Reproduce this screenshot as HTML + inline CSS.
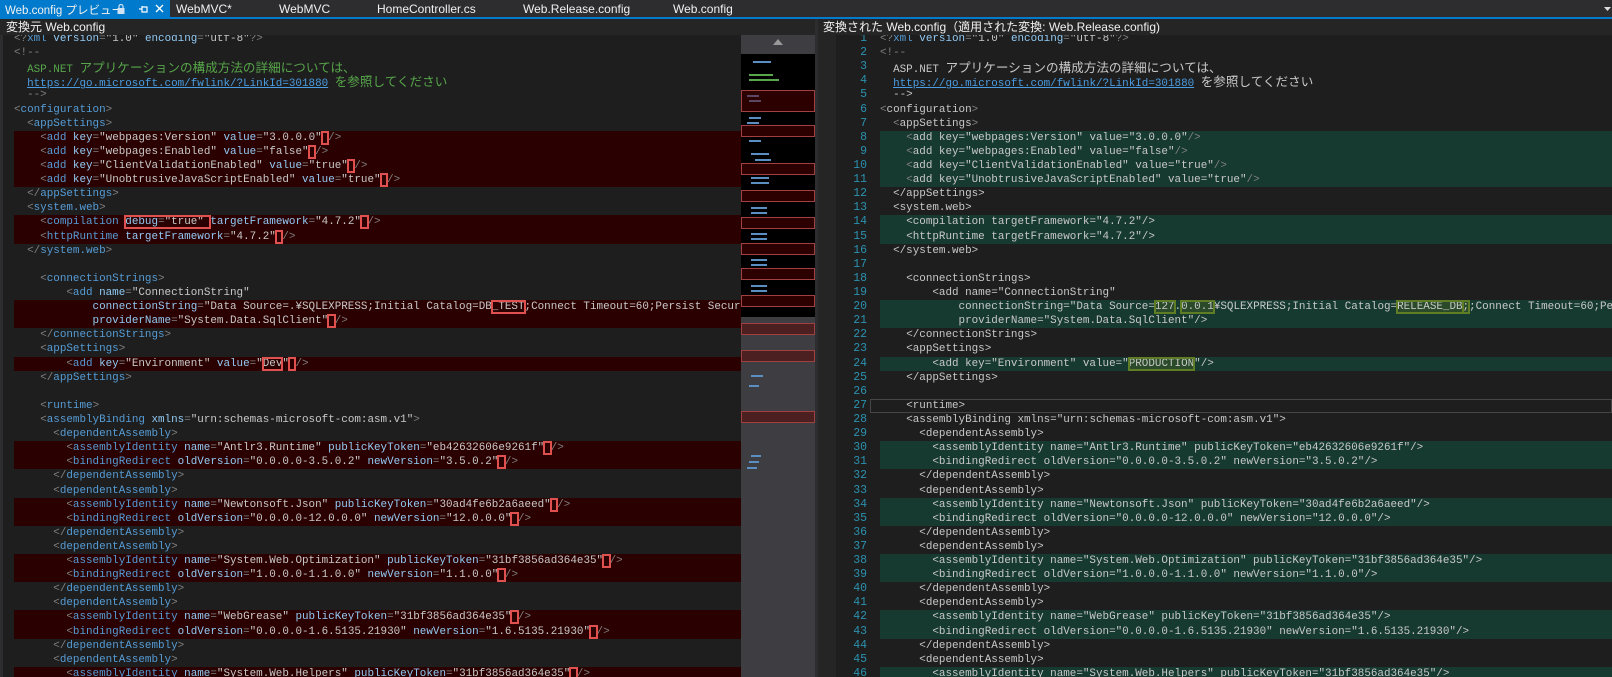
<!DOCTYPE html>
<html><head><meta charset="utf-8">
<style>
*{margin:0;padding:0;box-sizing:border-box}
body{width:1612px;height:677px;overflow:hidden;background:#1e1e1e;position:relative;font-family:"Liberation Sans","Noto Sans CJK JP",sans-serif}
.tabs{position:absolute;left:0;top:0;width:1612px;height:18px;background:#2d2d30;color:#f1f1f1;font-size:12px}
.tabs span{position:absolute;top:2px;white-space:nowrap}
.act{position:absolute;left:0;top:0;width:170px;height:19px;background:#007acc}
.bline{position:absolute;left:0;top:17px;width:1612px;height:2px;background:#007acc}
.hdr{position:absolute;top:19px;height:16px;background:#252526;color:#f1f1f1;font-size:12px;line-height:16px;white-space:nowrap}
.pane{position:absolute;top:35px;height:642px;overflow:hidden;font-family:"Liberation Mono","Noto Sans CJK JP",monospace;font-size:10.92px;color:#c8c8c8}
.in{position:absolute;left:0;top:-3px;width:100%}
.ln{height:14.12px;line-height:14.12px;white-space:pre;position:relative}
.L .ln{margin-left:14px}
.R .ln{margin-left:62px}
.L .h{background:#2b0000}
.R .h{background:#173a30}
.nm{position:absolute;left:-62px;width:49px;text-align:right;color:#2b91af;font-size:11.5px}
g{color:#808080}n{color:#569cd6}r{color:#92caf4}w{color:#c8c8c8}c{color:#57a64a}
l{color:#4b9ce0;text-decoration:underline}
j{font-size:12.6px;font-family:"Noto Sans CJK JP",sans-serif}
x{outline:2px solid #e0504f;outline-offset:-1px}
y{outline:2px solid #5f7d24;outline-offset:-1px;background:#2a4a2a}
.mm{position:absolute;left:741px;top:35px;width:74px;height:642px;background:#3e3e42;overflow:hidden}
.mm .vp{position:absolute;left:0;top:19px;width:74px;height:263px;background:#000}
.mm .b{position:absolute;height:1.6px;background:#5b8fc4}
.mm .rb{position:absolute;left:0;width:74px;border:1.5px solid #a04040;background:rgba(90,0,0,.5)}
</style></head><body>
<div class="tabs">
<div class="act"></div>
<span style="left:5px;font-size:11.5px">Web.config プレビュー</span>
<svg style="position:absolute;left:117px;top:4px" width="8" height="10"><rect x="0.5" y="4" width="7" height="6" fill="#cfe3f5"/><path d="M2 4V2.5a2 2 0 0 1 4 0V4" stroke="#cfe3f5" fill="none" stroke-width="1.2"/></svg>
<svg style="position:absolute;left:138px;top:4px" width="10" height="10"><path d="M1 5h3M4 2v6h5V3H4" stroke="#fff" fill="none" stroke-width="1.2"/></svg>
<svg style="position:absolute;left:155px;top:4px" width="9" height="9"><path d="M1 1l7 7M8 1L1 8" stroke="#fff" stroke-width="1.3"/></svg>
<span style="left:176px">WebMVC*</span>
<span style="left:279px">WebMVC</span>
<span style="left:377px">HomeController.cs</span>
<span style="left:523px">Web.Release.config</span>
<span style="left:673px">Web.config</span>
<svg style="position:absolute;left:1604px;top:7px" width="7" height="5"><path d="M0 0h7L3.5 4z" fill="#ddd"/></svg>
</div>
<div class="bline"></div>
<div class="hdr" style="left:0;width:815px;padding-left:6px">変換元 Web.config</div>
<div class="hdr" style="left:818px;width:794px;padding-left:5px">変換された Web.config（適用された変換: Web.Release.config)</div>
<div style="position:absolute;left:815px;top:19px;width:3px;height:658px;background:#2d2d30"></div>
<div style="position:absolute;left:818px;top:35px;width:18px;height:642px;background:#252526"></div>
<div style="position:absolute;left:0;top:35px;width:3px;height:642px;background:#2d2d30"></div>

<div class="pane L" style="left:0;width:741px"><div class="in">
<div class="ln"><g>&lt;?</g><n>xml</n> <r>version</r><g>=</g><w>"1.0"</w> <r>encoding</r><g>=</g><w>"utf-8"</w><g>?&gt;</g></div>
<div class="ln"><g>&lt;!--</g></div>
<div class="ln">  <c>ASP.NET <j>アプリケーションの構成方法の詳細については、</j></c></div>
<div class="ln">  <l>https://go.microsoft.com/fwlink/?LinkId=301880</l><c> <j>を参照してください</j></c></div>
<div class="ln">  <g>--&gt;</g></div>
<div class="ln"><g>&lt;</g><n>configuration</n><g>&gt;</g></div>
<div class="ln">  <g>&lt;</g><n>appSettings</n><g>&gt;</g></div>
<div class="ln h">    <g>&lt;</g><n>add</n> <r>key</r><g>=</g><w>"webpages:Version"</w> <r>value</r><g>=</g><w>"3.0.0.0"</w><x> </x><g>/&gt;</g></div>
<div class="ln h">    <g>&lt;</g><n>add</n> <r>key</r><g>=</g><w>"webpages:Enabled"</w> <r>value</r><g>=</g><w>"false"</w><x> </x><g>/&gt;</g></div>
<div class="ln h">    <g>&lt;</g><n>add</n> <r>key</r><g>=</g><w>"ClientValidationEnabled"</w> <r>value</r><g>=</g><w>"true"</w><x> </x><g>/&gt;</g></div>
<div class="ln h">    <g>&lt;</g><n>add</n> <r>key</r><g>=</g><w>"UnobtrusiveJavaScriptEnabled"</w> <r>value</r><g>=</g><w>"true"</w><x> </x><g>/&gt;</g></div>
<div class="ln">  <g>&lt;/</g><n>appSettings</n><g>&gt;</g></div>
<div class="ln">  <g>&lt;</g><n>system.web</n><g>&gt;</g></div>
<div class="ln h">    <g>&lt;</g><n>compilation</n> <x><r>debug</r><g>=</g><w>"true"</w> </x><r>targetFramework</r><g>=</g><w>"4.7.2"</w><x> </x><g>/&gt;</g></div>
<div class="ln h">    <g>&lt;</g><n>httpRuntime</n> <r>targetFramework</r><g>=</g><w>"4.7.2"</w><x> </x><g>/&gt;</g></div>
<div class="ln">  <g>&lt;/</g><n>system.web</n><g>&gt;</g></div>
<div class="ln"> </div>
<div class="ln">    <g>&lt;</g><n>connectionStrings</n><g>&gt;</g></div>
<div class="ln">        <g>&lt;</g><n>add</n> <r>name</r><g>=</g><w>"ConnectionString"</w></div>
<div class="ln h">            <r>connectionString</r><g>=</g><w>"Data Source=.¥SQLEXPRESS;Initial Catalog=DB<x>_TEST</x>;Connect Timeout=60;Persist Security Info=True"</w></div>
<div class="ln h">            <r>providerName</r><g>=</g><w>"System.Data.SqlClient"</w><x> </x><g>/&gt;</g></div>
<div class="ln">    <g>&lt;/</g><n>connectionStrings</n><g>&gt;</g></div>
<div class="ln">    <g>&lt;</g><n>appSettings</n><g>&gt;</g></div>
<div class="ln h">        <g>&lt;</g><n>add</n> <r>key</r><g>=</g><w>"Environment"</w> <r>value</r><g>=</g><w>"<x>Dev</x>"</w><x> </x><g>/&gt;</g></div>
<div class="ln">    <g>&lt;/</g><n>appSettings</n><g>&gt;</g></div>
<div class="ln"> </div>
<div class="ln">    <g>&lt;</g><n>runtime</n><g>&gt;</g></div>
<div class="ln">    <g>&lt;</g><n>assemblyBinding</n> <r>xmlns</r><g>=</g><w>"urn:schemas-microsoft-com:asm.v1"</w><g>&gt;</g></div>
<div class="ln">      <g>&lt;</g><n>dependentAssembly</n><g>&gt;</g></div>
<div class="ln h">        <g>&lt;</g><n>assemblyIdentity</n> <r>name</r><g>=</g><w>"Antlr3.Runtime"</w> <r>publicKeyToken</r><g>=</g><w>"eb42632606e9261f"</w><x> </x><g>/&gt;</g></div>
<div class="ln h">        <g>&lt;</g><n>bindingRedirect</n> <r>oldVersion</r><g>=</g><w>"0.0.0.0-3.5.0.2"</w> <r>newVersion</r><g>=</g><w>"3.5.0.2"</w><x> </x><g>/&gt;</g></div>
<div class="ln">      <g>&lt;/</g><n>dependentAssembly</n><g>&gt;</g></div>
<div class="ln">      <g>&lt;</g><n>dependentAssembly</n><g>&gt;</g></div>
<div class="ln h">        <g>&lt;</g><n>assemblyIdentity</n> <r>name</r><g>=</g><w>"Newtonsoft.Json"</w> <r>publicKeyToken</r><g>=</g><w>"30ad4fe6b2a6aeed"</w><x> </x><g>/&gt;</g></div>
<div class="ln h">        <g>&lt;</g><n>bindingRedirect</n> <r>oldVersion</r><g>=</g><w>"0.0.0.0-12.0.0.0"</w> <r>newVersion</r><g>=</g><w>"12.0.0.0"</w><x> </x><g>/&gt;</g></div>
<div class="ln">      <g>&lt;/</g><n>dependentAssembly</n><g>&gt;</g></div>
<div class="ln">      <g>&lt;</g><n>dependentAssembly</n><g>&gt;</g></div>
<div class="ln h">        <g>&lt;</g><n>assemblyIdentity</n> <r>name</r><g>=</g><w>"System.Web.Optimization"</w> <r>publicKeyToken</r><g>=</g><w>"31bf3856ad364e35"</w><x> </x><g>/&gt;</g></div>
<div class="ln h">        <g>&lt;</g><n>bindingRedirect</n> <r>oldVersion</r><g>=</g><w>"1.0.0.0-1.1.0.0"</w> <r>newVersion</r><g>=</g><w>"1.1.0.0"</w><x> </x><g>/&gt;</g></div>
<div class="ln">      <g>&lt;/</g><n>dependentAssembly</n><g>&gt;</g></div>
<div class="ln">      <g>&lt;</g><n>dependentAssembly</n><g>&gt;</g></div>
<div class="ln h">        <g>&lt;</g><n>assemblyIdentity</n> <r>name</r><g>=</g><w>"WebGrease"</w> <r>publicKeyToken</r><g>=</g><w>"31bf3856ad364e35"</w><x> </x><g>/&gt;</g></div>
<div class="ln h">        <g>&lt;</g><n>bindingRedirect</n> <r>oldVersion</r><g>=</g><w>"0.0.0.0-1.6.5135.21930"</w> <r>newVersion</r><g>=</g><w>"1.6.5135.21930"</w><x> </x><g>/&gt;</g></div>
<div class="ln">      <g>&lt;/</g><n>dependentAssembly</n><g>&gt;</g></div>
<div class="ln">      <g>&lt;</g><n>dependentAssembly</n><g>&gt;</g></div>
<div class="ln h">        <g>&lt;</g><n>assemblyIdentity</n> <r>name</r><g>=</g><w>"System.Web.Helpers"</w> <r>publicKeyToken</r><g>=</g><w>"31bf3856ad364e35"</w><x> </x><g>/&gt;</g></div>
</div></div>

<div class="mm">
<svg style="position:absolute;left:32px;top:4px" width="10" height="6"><path d="M0 6L5 0L10 6z" fill="#999"/></svg>
<div class="vp"></div>
<div class="b" style="left:12px;top:26px;width:18px"></div>
<div class="b" style="left:8px;top:39px;width:24px;background:#57a64a"></div>
<div class="b" style="left:8px;top:44px;width:30px;background:#57a64a"></div>
<div class="b" style="left:6px;top:60px;width:12px"></div>
<div class="b" style="left:8px;top:65px;width:12px"></div>
<div class="rb" style="top:55px;height:22px"></div>
<div class="b" style="left:8px;top:82px;width:12px"></div>
<div class="b" style="left:6px;top:87px;width:12px"></div>
<div class="rb" style="top:90px;height:12px"></div>
<div class="b" style="left:8px;top:105px;width:12px"></div>
<div class="b" style="left:10px;top:118px;width:18px"></div>
<div class="b" style="left:14px;top:124px;width:16px"></div>
<div class="rb" style="top:128px;height:12px"></div>
<div class="b" style="left:10px;top:142px;width:18px"></div>
<div class="b" style="left:10px;top:147px;width:18px"></div>
<div class="rb" style="top:155px;height:12px"></div>
<div class="b" style="left:10px;top:172px;width:16px"></div>
<div class="b" style="left:10px;top:177px;width:16px"></div>
<div class="rb" style="top:182px;height:12px"></div>
<div class="b" style="left:10px;top:198px;width:16px"></div>
<div class="b" style="left:10px;top:203px;width:16px"></div>
<div class="rb" style="top:208px;height:12px"></div>
<div class="b" style="left:10px;top:224px;width:16px"></div>
<div class="b" style="left:10px;top:229px;width:16px"></div>
<div class="rb" style="top:233px;height:12px"></div>
<div class="b" style="left:10px;top:250px;width:16px"></div>
<div class="b" style="left:10px;top:255px;width:16px"></div>
<div class="rb" style="top:260px;height:12px"></div>
<div class="rb" style="top:288px;height:12px"></div>
<div class="rb" style="top:315px;height:12px"></div>
<div class="b" style="left:10px;top:340px;width:12px"></div>
<div class="b" style="left:8px;top:350px;width:10px"></div>
<div class="rb" style="top:376px;height:12px"></div>
<div class="b" style="left:10px;top:420px;width:10px"></div>
<div class="b" style="left:8px;top:426px;width:10px"></div>
<div class="b" style="left:6px;top:432px;width:10px"></div>
</div>

<div class="pane R" style="left:818px;width:794px"><div class="in">
<div class="ln"><span class="nm">1</span><g>&lt;?</g><n>xml</n> <r>version</r><g>=</g><w>"1.0"</w> <r>encoding</r><g>=</g><w>"utf-8"</w><g>?&gt;</g></div>
<div class="ln"><span class="nm">2</span><g>&lt;!--</g></div>
<div class="ln"><span class="nm">3</span>  <c style="color:#c8c8c8">ASP.NET <j>アプリケーションの構成方法の詳細については、</j></c></div>
<div class="ln"><span class="nm">4</span>  <l>https://go.microsoft.com/fwlink/?LinkId=301880</l><w> <j>を参照してください</j></w></div>
<div class="ln"><span class="nm">5</span>  <w>--&gt;</w></div>
<div class="ln"><span class="nm">6</span><g>&lt;</g><w>configuration</w><g>&gt;</g></div>
<div class="ln"><span class="nm">7</span>  <g>&lt;</g><w>appSettings</w><g>&gt;</g></div>
<div class="ln h"><span class="nm">8</span>    <g>&lt;</g><w>add key="webpages:Version" value="3.0.0.0"</w><g>/&gt;</g></div>
<div class="ln h"><span class="nm">9</span>    <g>&lt;</g><w>add key="webpages:Enabled" value="false"</w><g>/&gt;</g></div>
<div class="ln h"><span class="nm">10</span>    <g>&lt;</g><w>add key="ClientValidationEnabled" value="true"</w><g>/&gt;</g></div>
<div class="ln h"><span class="nm">11</span>    <g>&lt;</g><w>add key="UnobtrusiveJavaScriptEnabled" value="true"</w><g>/&gt;</g></div>
<div class="ln"><span class="nm">12</span>  <w>&lt;/appSettings&gt;</w></div>
<div class="ln"><span class="nm">13</span>  <w>&lt;system.web&gt;</w></div>
<div class="ln h"><span class="nm">14</span>    <w>&lt;compilation targetFramework="4.7.2"/&gt;</w></div>
<div class="ln h"><span class="nm">15</span>    <w>&lt;httpRuntime targetFramework="4.7.2"/&gt;</w></div>
<div class="ln"><span class="nm">16</span>  <w>&lt;/system.web&gt;</w></div>
<div class="ln"><span class="nm">17</span></div>
<div class="ln"><span class="nm">18</span>    <w>&lt;connectionStrings&gt;</w></div>
<div class="ln"><span class="nm">19</span>        <w>&lt;add name="ConnectionString"</w></div>
<div class="ln h"><span class="nm">20</span>            <w>connectionString="Data Source=<y>127</y>.<y>0.0.1</y>¥SQLEXPRESS;Initial Catalog=<y>RELEASE_DB</y><y>;</y>;Connect Timeout=60;Persist Security Info=True"</w></div>
<div class="ln h"><span class="nm">21</span>            <w>providerName="System.Data.SqlClient"/&gt;</w></div>
<div class="ln"><span class="nm">22</span>    <w>&lt;/connectionStrings&gt;</w></div>
<div class="ln"><span class="nm">23</span>    <w>&lt;appSettings&gt;</w></div>
<div class="ln h"><span class="nm">24</span>        <w>&lt;add key="Environment" value="<y>PRODUCTION</y>"/&gt;</w></div>
<div class="ln"><span class="nm">25</span>    <w>&lt;/appSettings&gt;</w></div>
<div class="ln"><span class="nm">26</span></div>
<div class="ln" style="outline:1px solid #464646;outline-offset:-1px;margin-left:52px;padding-left:10px"><span class="nm" style="left:-52px">27</span>    <w>&lt;runtime&gt;</w></div>
<div class="ln"><span class="nm">28</span>    <w>&lt;assemblyBinding xmlns="urn:schemas-microsoft-com:asm.v1"&gt;</w></div>
<div class="ln"><span class="nm">29</span>      <w>&lt;dependentAssembly&gt;</w></div>
<div class="ln h"><span class="nm">30</span>        <w>&lt;assemblyIdentity name="Antlr3.Runtime" publicKeyToken="eb42632606e9261f"/&gt;</w></div>
<div class="ln h"><span class="nm">31</span>        <w>&lt;bindingRedirect oldVersion="0.0.0.0-3.5.0.2" newVersion="3.5.0.2"/&gt;</w></div>
<div class="ln"><span class="nm">32</span>      <w>&lt;/dependentAssembly&gt;</w></div>
<div class="ln"><span class="nm">33</span>      <w>&lt;dependentAssembly&gt;</w></div>
<div class="ln h"><span class="nm">34</span>        <w>&lt;assemblyIdentity name="Newtonsoft.Json" publicKeyToken="30ad4fe6b2a6aeed"/&gt;</w></div>
<div class="ln h"><span class="nm">35</span>        <w>&lt;bindingRedirect oldVersion="0.0.0.0-12.0.0.0" newVersion="12.0.0.0"/&gt;</w></div>
<div class="ln"><span class="nm">36</span>      <w>&lt;/dependentAssembly&gt;</w></div>
<div class="ln"><span class="nm">37</span>      <w>&lt;dependentAssembly&gt;</w></div>
<div class="ln h"><span class="nm">38</span>        <w>&lt;assemblyIdentity name="System.Web.Optimization" publicKeyToken="31bf3856ad364e35"/&gt;</w></div>
<div class="ln h"><span class="nm">39</span>        <w>&lt;bindingRedirect oldVersion="1.0.0.0-1.1.0.0" newVersion="1.1.0.0"/&gt;</w></div>
<div class="ln"><span class="nm">40</span>      <w>&lt;/dependentAssembly&gt;</w></div>
<div class="ln"><span class="nm">41</span>      <w>&lt;dependentAssembly&gt;</w></div>
<div class="ln h"><span class="nm">42</span>        <w>&lt;assemblyIdentity name="WebGrease" publicKeyToken="31bf3856ad364e35"/&gt;</w></div>
<div class="ln h"><span class="nm">43</span>        <w>&lt;bindingRedirect oldVersion="0.0.0.0-1.6.5135.21930" newVersion="1.6.5135.21930"/&gt;</w></div>
<div class="ln"><span class="nm">44</span>      <w>&lt;/dependentAssembly&gt;</w></div>
<div class="ln"><span class="nm">45</span>      <w>&lt;dependentAssembly&gt;</w></div>
<div class="ln h"><span class="nm">46</span>        <w>&lt;assemblyIdentity name="System.Web.Helpers" publicKeyToken="31bf3856ad364e35"/&gt;</w></div>
</div></div>
</body></html>
